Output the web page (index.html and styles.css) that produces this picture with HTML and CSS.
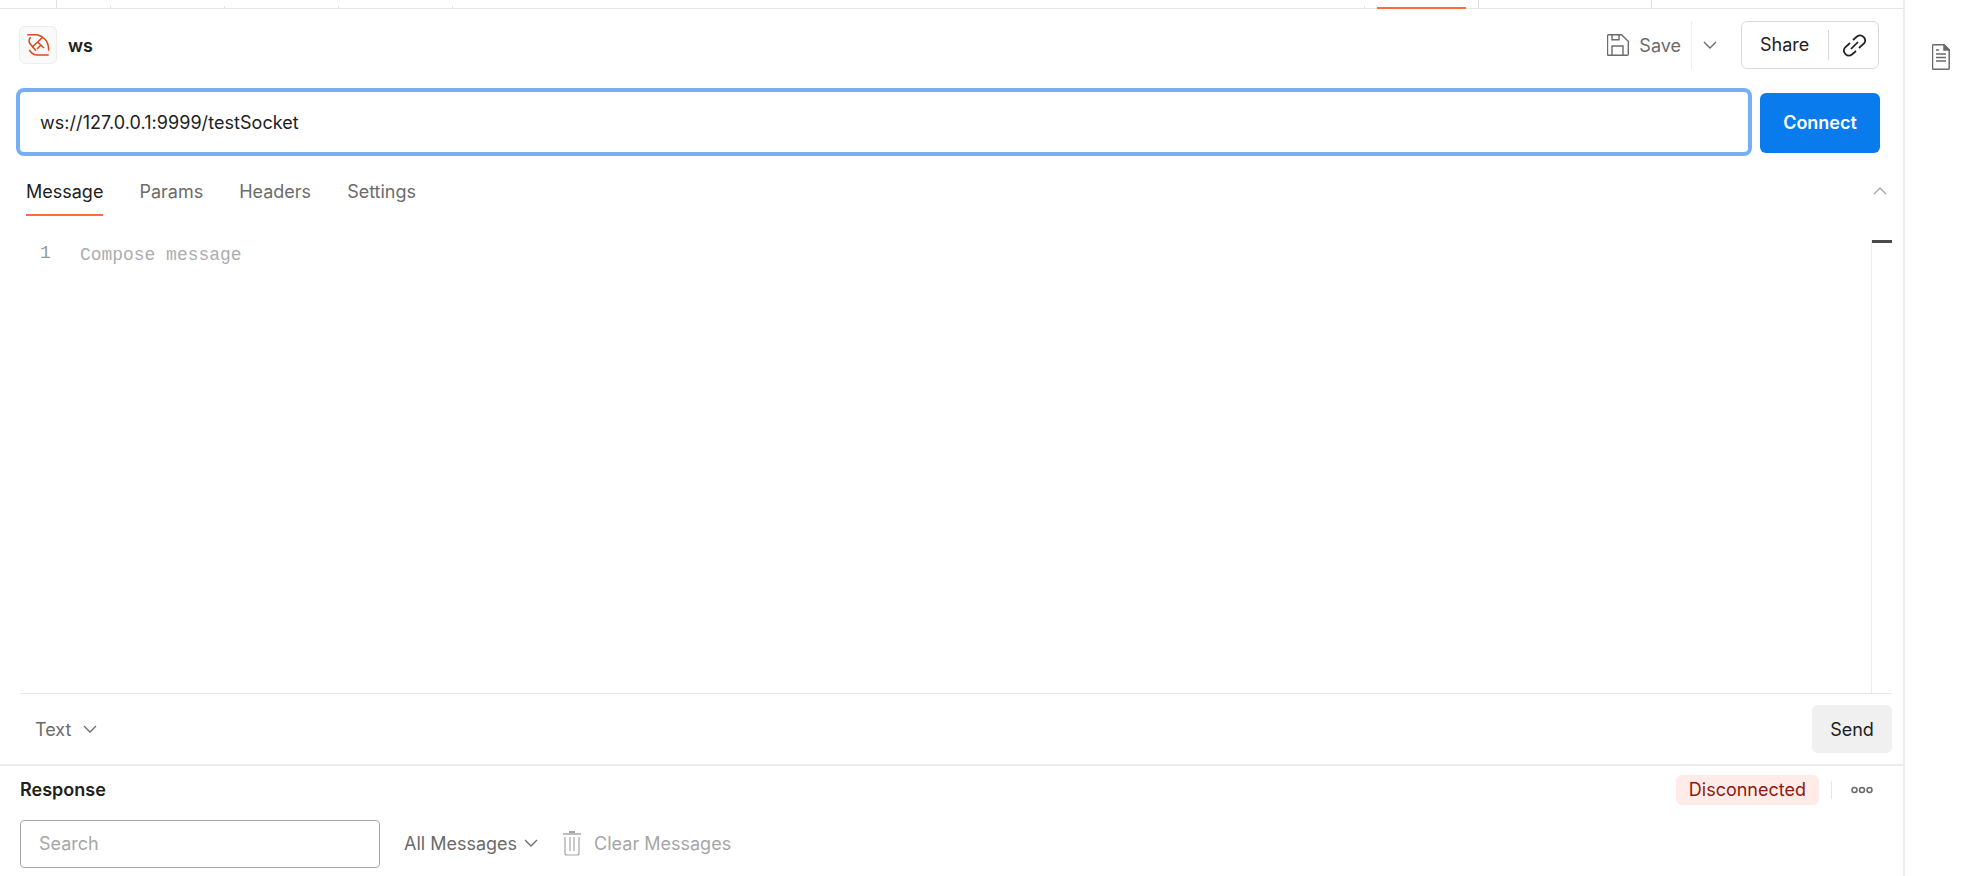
FILE: index.html
```html
<!DOCTYPE html>
<html lang="en">
<head>
    <meta charset="UTF-8">
    <title>ws</title>
    <link rel="stylesheet" href="styles.css">
</head>
<body>
<div class="app">
    <div class="main">
        <div class="tabstrip">
            <span class="strip-cell first"></span>
            <span class="strip-cell second"></span>
            <span class="strip-cell"></span>
            <span class="strip-cell"></span>
            <span class="strip-cell"></span>
            <span class="strip-cell grow"></span>
            <span class="strip-cell active"></span>
            <span class="strip-cell wide"></span>
            <span class="strip-cell last"></span>
        </div>

        <div class="head">
            <span class="logo">
                <svg width="30" height="30" viewBox="-1 0 30 30" fill="none" stroke="#d9481c" stroke-width="1.500">
                    <path d="M3.300 4.700h9.700c3 .5 6 2.500 8 4.500c2.500 2.500 3.700 7 3.700 11.500"/>
                    <path d="M6.700 7.300c-1.500 1.500-2 4-1 6l6.300 7.400"/>
                    <path d="M8 17.300l10.700-10M13.300 11.700l6.700 6.300M13 19l4-4"/>
                    <path d="M5.300 20c2 3 4.200 5 7.700 5h11.700"/>
                </svg>
            </span>
            <span class="req-name">ws</span>
            <div class="head-right">
                <span class="save">
                    <svg width="22" height="22" viewBox="0 0 22 22" fill="none" stroke="#6b6b6b" stroke-width="1.400">
                        <path d="M1.500 .7h13l6.800 6.500v13a1 1 0 0 1-1 1h-18.800a1 1 0 0 1-1-1v-18.500a1 1 0 0 1 1-1z"/>
                        <path d="M5 .7v5h7v-5M5 21.300v-9.300h11v9.300"/>
                    </svg>
                    Save
                </span>
                <span class="save-more">
                    <svg width="14" height="8" viewBox="0 0 14 8" fill="none" stroke="#6b6b6b" stroke-width="1.400"><path d="M1 1l6 6l6-6"/></svg>
                </span>
                <span class="share">
                    <span class="share-text">Share</span>
                    <span class="share-link">
                        <svg width="23" height="23" viewBox="0 0 23 23" fill="none" stroke="#212121" stroke-width="1.700">
                            <path d="M10 6l4-3.500a5 5 0 0 1 7 7l-5 4.500"/>
                            <path d="M13 17l-4 3.500a5 5 0 0 1-7-7l5-4.500"/>
                            <path d="M8 15l7-7"/>
                        </svg>
                    </span>
                </span>
            </div>
        </div>

        <div class="url-row">
            <div class="url-field">ws://127.0.0.1:9999/testSocket</div>
            <button class="connect">Connect</button>
        </div>

        <div class="tabs">
            <span class="tab current">Message</span>
            <span class="tab">Params</span>
            <span class="tab">Headers</span>
            <span class="tab">Settings</span>
            <svg class="collapse" width="14" height="8" viewBox="0 0 14 8" fill="none" stroke="#a6a6a6" stroke-width="1.400"><path d="M1 7l6-6l6 6"/></svg>
        </div>

        <div class="editor">
            <span class="line-no">1</span>
            <span class="placeholder">Compose message</span>
            <div class="minimap"><span class="minimap-mark"></span></div>
        </div>

        <div class="composer">
            <span class="format">Text
                <svg width="14" height="8" viewBox="0 0 14 8" fill="none" stroke="#6b6b6b" stroke-width="1.300"><path d="M1 1l6 6l6-6"/></svg>
            </span>
            <button class="send">Send</button>
        </div>

        <div class="response">
            <div class="resp-head">
                <span class="resp-title">Response</span>
                <span class="badge">Disconnected</span>
                <span class="resp-sep"></span>
                <svg class="dots" width="22" height="8" viewBox="0 0 22 8" fill="none" stroke="#6b6b6b" stroke-width="1.500">
                    <circle cx="3.500" cy="4" r="2.500"/><circle cx="11" cy="4" r="2.500"/><circle cx="18.500" cy="4" r="2.500"/>
                </svg>
            </div>
            <div class="resp-tools">
                <div class="search">Search</div>
                <span class="filter">All Messages
                    <svg width="14" height="8" viewBox="0 0 14 8" fill="none" stroke="#6b6b6b" stroke-width="1.300"><path d="M1 1l6 6l6-6"/></svg>
                </span>
                <span class="clear">
                    <svg width="18" height="25" viewBox="0 0 18 25" fill="none" stroke="#a6a6a6" stroke-width="1.200">
                        <path d="M6 1h6" stroke-width="2"/><path d="M0 3h18" stroke-width="1.500"/>
                        <path d="M2 6v16a2 2 0 0 0 2 2h10a2 2 0 0 0 2-2v-16M7 6v14M11 6v14"/>
                    </svg>
                    Clear Messages
                </span>
            </div>
        </div>
    </div>
    <div class="side">
        <svg width="18" height="26" viewBox="0 0 18 26" fill="none" stroke="#6b6b6b" stroke-width="1.500">
            <path d="M1.500 .8h10.500l5.200 5.200v18.200a1 1 0 0 1-1 1h-14.700a1 1 0 0 1-1-1v-22.400a1 1 0 0 1 1-1z"/>
            <path d="M12 .8v5.200h5.200z" fill="#6b6b6b"/>
            <path d="M4 6h3M4 10h10M4 13.500h10M4 17h10"/>
        </svg>
    </div>
</div>
</body>
</html>
```

FILE: styles.css
```css
* {
    margin: 0;
    padding: 0;
    box-sizing: border-box;
}

html, body {
    height: 100%;
    overflow: hidden;
    background: #fff;
}

body {
    font-family: Inter, "Liberation Sans", sans-serif;
    font-size: 18px;
    color: #212121;
}

button {
    font: inherit;
    border: 0;
}

svg {
    display: block;
    flex: none;
}

.app {
    display: flex;
    height: 876px;
}

.main {
    display: flex;
    flex-direction: column;
    width: 1905px;
    height: 876px;
    border-right: 2px solid #ededed;
    overflow: hidden;
}

.side {
    flex: 1;
    display: flex;
    justify-content: center;
    padding-top: 44px;
    padding-left: 2px;
}

/* top strip with the cut-off request tabs */
.tabstrip {
    display: flex;
    align-items: flex-end;
    flex: none;
    height: 9px;
    border-bottom: 1px solid #e6e6e6;
}

.strip-cell {
    flex: none;
    width: 114px;
    height: 2px;
    border-right: 1px solid #e0e0e0;
}

.strip-cell.first {
    width: 57px;
    height: 8px;
}

.strip-cell.second {
    width: 54px;
}

.strip-cell.grow {
    flex: 1;
    margin-right: 12px;
}

.strip-cell.active {
    width: 89px;
    height: 2px;
    margin: 0 12px -1px 0;
    border-right: 0;
    background: #ff6c37;
}

.strip-cell.wide {
    width: 174px;
    height: 8px;
    border-left: 1px solid #e0e0e0;
}

.strip-cell.last {
    width: 251px;
    border-right: 0;
}

.head {
    display: flex;
    align-items: center;
    flex: none;
    height: 72px;
    padding: 0 24px 0 19px;
}

.logo {
    display: flex;
    align-items: center;
    justify-content: center;
    width: 38px;
    height: 38px;
    background: #f9f9f9;
    border: 1px solid #ededed;
    border-radius: 6px;
}

.req-name {
    margin-left: 11px;
    font-weight: 600;
}

.head-right {
    display: flex;
    align-items: center;
    margin-left: auto;
    height: 48px;
}

.save {
    display: flex;
    align-items: center;
    gap: 10px;
    height: 48px;
    padding-right: 10px;
    color: #6b6b6b;
    border-right: 1px solid #ededed;
}

.save-more {
    width: 49px;
    padding-left: 11px;
}

.share {
    display: flex;
    align-items: center;
    width: 138px;
    height: 48px;
    border: 1px solid #d9d9d9;
    border-radius: 6px;
}

.share-text {
    width: 87px;
    padding-left: 18px;
    border-right: 1px solid #d9d9d9;
    line-height: 30px;
}

.share-link {
    padding-left: 14px;
}

.url-row {
    display: flex;
    align-items: center;
    flex: none;
    height: 68px;
    margin-top: 7px;
    padding: 0 23px 0 16px;
}

.url-field {
    flex: 1;
    height: 68px;
    padding-left: 20px;
    line-height: 62px;
    letter-spacing: .05px;
    border: 4px solid #74aef5;
    border-radius: 8px;
}

.connect {
    width: 120px;
    height: 60px;
    margin: 2px 0 0 8px;
    padding-bottom: 2px;
    background: #097bed;
    color: #fff;
    font-weight: 600;
    border-radius: 6px;
}

.tabs {
    display: flex;
    align-items: stretch;
    flex: none;
    height: 60px;
    padding: 12px 16px 0 26px;
}

.tab {
    height: 48px;
    margin-right: 36px;
    padding-top: 13px;
    color: #6b6b6b;
}

.tab.current {
    color: #212121;
    border-bottom: 2px solid #ff6c37;
}

.collapse {
    margin: 19px 0 0 auto;
}

.editor {
    display: flex;
    flex: 1;
    padding-left: 40px;
    font-family: "Liberation Mono", monospace;
    font-size: 17.950px;
    color: #adadad;
}

.line-no {
    width: 40px;
    padding-top: 27px;
    color: #8f9c99;
}

.placeholder {
    flex: 1;
    padding-top: 29px;
}

.minimap {
    width: 21px;
    margin: 24px 11px 0 0;
    border-left: 1px solid #ededed;
}

.minimap-mark {
    display: block;
    height: 3px;
    background: #4a4a4a;
}

.composer {
    display: flex;
    align-items: center;
    justify-content: space-between;
    flex: none;
    height: 71px;
    margin: 0 11px 0 20px;
    padding-left: 15px;
    border-top: 1px solid #e6e6e6;
}

.format {
    display: flex;
    align-items: center;
    gap: 12px;
    color: #6b6b6b;
}

.send {
    width: 80px;
    height: 48px;
    background: #f0f0f0;
    color: #212121;
    border-radius: 6px;
}

.response {
    flex: none;
    height: 112px;
    padding: 9px 30px 0 20px;
    border-top: 2px solid #ededed;
}

.resp-head {
    display: flex;
    align-items: center;
    height: 30px;
}

.resp-title {
    margin: 0 auto 2px 0;
    font-weight: 600;
}

.badge {
    height: 30px;
    padding: 0 13px;
    line-height: 30px;
    background: #ffebe7;
    color: #8e1a10;
    border-radius: 6px;
}

.resp-sep {
    width: 1px;
    height: 18px;
    margin: 0 19px 0 12px;
    background: #e6e6e6;
}

.resp-tools {
    display: flex;
    align-items: center;
    margin-top: 15px;
}

.search {
    width: 360px;
    height: 48px;
    padding-left: 18px;
    line-height: 46px;
    color: #a6a6a6;
    border: 1px solid #a6a6a6;
    border-radius: 4px;
}

.filter {
    display: flex;
    align-items: center;
    gap: 7px;
    margin-left: 24px;
    padding-bottom: 2px;
    color: #6b6b6b;
}

.clear {
    display: flex;
    align-items: center;
    gap: 13px;
    margin-left: 25px;
    padding-bottom: 2px;
    color: #a6a6a6;
}
```
